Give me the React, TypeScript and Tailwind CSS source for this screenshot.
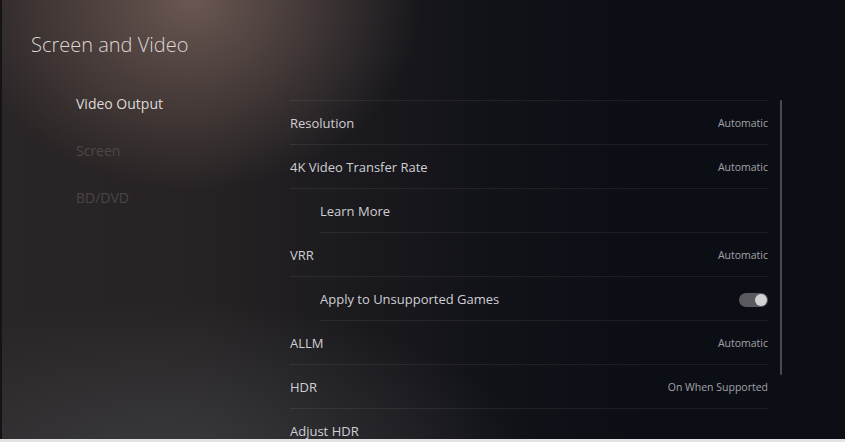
import React from "react";

type Row = {
  label: string;
  value?: string;
  indent?: boolean;
  toggle?: boolean;
};

const rows: Row[] = [
  { label: "Resolution", value: "Automatic" },
  { label: "4K Video Transfer Rate", value: "Automatic" },
  { label: "Learn More", indent: true },
  { label: "VRR", value: "Automatic" },
  { label: "Apply to Unsupported Games", indent: true, toggle: true },
  { label: "ALLM", value: "Automatic" },
  { label: "HDR", value: "On When Supported" },
  { label: "Adjust HDR" },
];

function Toggle() {
  return (
    <div className="flex h-[14px] w-[29px] items-center justify-end rounded-full bg-[#5a5a60] pr-[1px]">
      <div className="h-[12px] w-[12px] rounded-full bg-[#d2d2d4]" />
    </div>
  );
}

export default function App() {
  return (
    <div
      className="flex h-[442px] w-full flex-col overflow-hidden"
      style={{ fontFamily: '"Open Sans", "Noto Sans", sans-serif' }}
    >
      <div className="flex h-[439px] w-full flex-col border-l-2 border-[#141418] bg-[#0c0e15] bg-[image:radial-gradient(ellipse_230px_190px_at_190px_0px,rgba(128,104,96,0.75),rgba(60,50,50,0)),radial-gradient(ellipse_360px_170px_at_170px_470px,rgba(66,68,72,0.7),rgba(0,0,0,0)),linear-gradient(90deg,#2a2526_0px,#272324_200px,#1c1b1f_330px,#121319_480px,#0c0e15_640px,#0c0e15_100%)]">
        <div className="pl-[29px] pt-[31px] text-[20px] font-light leading-[28px] text-[#ddd6d3]">
          Screen and Video
        </div>
        <div className="mt-[34px] flex">
          <nav className="flex w-[288px] flex-col gap-[27px] pl-[74px] pt-[1px] text-[14px] leading-[20px]">
            <div className="text-[#dcd8d6]">Video Output</div>
            <div className="text-[#4d4849]">Screen</div>
            <div className="text-[#4a4647]">BD/DVD</div>
          </nav>
          <div className="flex">
            <div className="w-[478px] pt-[7px]">
              <div className="flex flex-col border-t border-white/[0.07]">
                {rows.map((r) => (
                  <div
                    key={r.label}
                    className={`flex h-[44px] shrink-0 items-center justify-between border-b border-white/[0.07] pt-[2px] ${
                      r.indent ? "ml-[30px]" : ""
                    }`}
                  >
                    <span className="text-[13px] text-[#cfcfd3]">{r.label}</span>
                    {r.value && (
                      <span className="text-[10.5px] text-[#a2a2a8]">{r.value}</span>
                    )}
                    {r.toggle && <Toggle />}
                  </div>
                ))}
              </div>
            </div>
            <div className="ml-[12px] mt-[7px] h-[275px] w-[2px] rounded-full bg-[#4a4c55]" />
          </div>
        </div>
      </div>
      <div className="h-[3px] w-full bg-[#e4e4e4]" />
    </div>
  );
}
